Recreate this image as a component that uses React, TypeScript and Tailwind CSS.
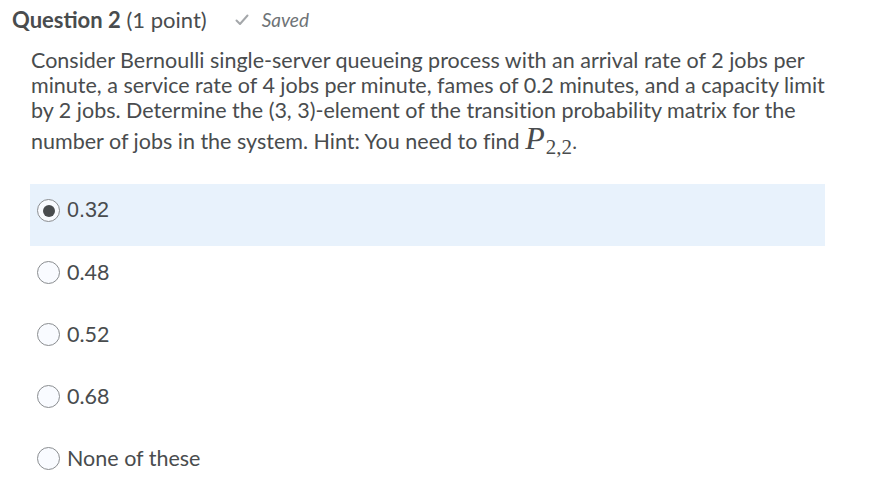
import React from 'react';

const options = ['0.32', '0.48', '0.52', '0.68', 'None of these'];

const Radio = ({ checked }: { checked: boolean }) => (
  <span className="flex h-[23px] w-[23px] shrink-0 items-center justify-center rounded-full border border-[#8a8d90] bg-[#f9fbff]">
    {checked && <span className="h-[12px] w-[12px] rounded-full bg-[#494c4e]" />}
  </span>
);

export default function App() {
  const selected = 0;
  return (
    <div className="min-h-screen bg-white text-[#494c4e]" style={{ fontFamily: 'Lato, "Open Sans", sans-serif' }}>
      <div className="flex items-center pl-[12px] pt-[6px] h-[34px]">
        <h2 className="text-[22px] leading-[28px]">
          <span className="font-bold">Question 2</span> (1 point)
        </h2>
        <span className="ml-[28px] flex items-center gap-[13px] text-[#6e7376]">
          <svg width="14" height="12" viewBox="0 0 14 12" fill="none">
            <path d="M1.5 6.5 L5 10 L12.5 1.5" stroke="#a4a7aa" strokeWidth="2" strokeLinecap="round" strokeLinejoin="round" />
          </svg>
          <span className="text-[19px] italic">Saved</span>
        </span>
      </div>

      <div className="pl-[31px] pt-[14px] w-[832px]">
        <p className="text-[21.5px] leading-[25px] [font-variant-ligatures:none]">
          Consider Bernoulli single-server queueing process with an arrival rate of 2 jobs per minute, a service rate of 4
          jobs per minute, fames of 0.2 minutes, and a capacity limit by 2 jobs. Determine the (3, 3)-element of the
          transition probability matrix for the number of jobs in the system. Hint: You need to find{' '}
          <span className="inline-block whitespace-nowrap leading-[30px]" style={{ fontFamily: '"Liberation Serif", serif' }}>
            <span className="text-[32px] italic">P</span>
            <span className="relative top-[5px] ml-[1px] text-[21px]">2,2</span>
            <span className="text-[21px]">.</span>
          </span>
        </p>
      </div>

      <div className="mt-[27px] w-[795px] ml-[30px]">
        {options.map((opt, i) => (
          <div
            key={opt}
            className={`flex h-[62px] items-start gap-[7px] pl-[7px] pt-[15px] ${i === selected ? 'bg-[#e8f2fc]' : ''}`}
          >
            <Radio checked={i === selected} />
            <span
              className="text-[21.5px] leading-[23px]"
              style={i === selected ? { fontFamily: '"Liberation Sans", Arial, sans-serif' } : undefined}
            >
              {opt}
            </span>
          </div>
        ))}
      </div>
    </div>
  );
}
